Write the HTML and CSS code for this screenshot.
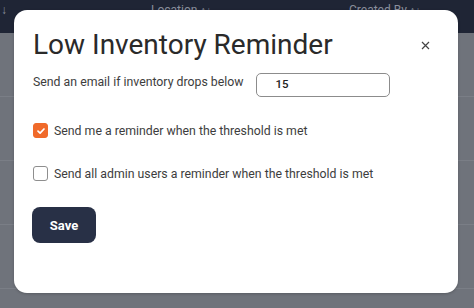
FILE: index.html
```html
<!DOCTYPE html>
<html>
<head>
<meta charset="utf-8">
<link rel="stylesheet" href="styles.css">
</head>
<body>
<div class="page">
  <div class="thead">
    <span class="th th-first">↓</span>
    <span class="th th-loc">Location <span class="sort">↑↓</span></span>
    <span class="th th-by">Created By <span class="sort">↑↓</span></span>
  </div>
  <div class="row"></div>
  <div class="row"></div>
  <div class="row"></div>
  <div class="row"></div>
</div>
<div class="overlay"></div>
<div class="modal">
  <div class="modal-head">
    <h1 class="title">Low Inventory Reminder</h1>
    <button class="close" aria-label="Close">
      <svg width="9" height="9" viewBox="0 0 9 9"><path d="M1 1L8 8M8 1L1 8" stroke="#444" stroke-width="1.2" fill="none"/></svg>
    </button>
  </div>
  <div class="field">
    <label class="label">Send an email if inventory drops below</label>
    <div class="input">15</div>
  </div>
  <div class="check-row first">
    <span class="box checked">
      <svg width="10" height="10" viewBox="0 0 10 10"><path d="M2 5.2L4.1 7.2L8 3" stroke="#fff" stroke-width="1.7" fill="none" stroke-linecap="round" stroke-linejoin="round"/></svg>
    </span>
    <span class="check-label">Send me a reminder when the threshold is met</span>
  </div>
  <div class="check-row second">
    <span class="box"></span>
    <span class="check-label">Send all admin users a reminder when the threshold is met</span>
  </div>
  <button class="save">Save</button>
</div>
</body>
</html>
```

FILE: styles.css
```css
html, body {
  margin: 0;
  padding: 0;
}
body {
  width: 474px;
  height: 308px;
  overflow: hidden;
  font-family: Roboto, "Liberation Sans", sans-serif;
  background: #6f737b;
  position: relative;
}
.page {
  width: 474px;
}
.thead {
  height: 33px;
  background: #1f2535;
  color: #8a8f9c;
  font-size: 12px;
  position: relative;
}
.th {
  position: absolute;
  top: 3px;
}
.th-first { left: 1px; }
.th-loc { left: 151px; }
.th-by { left: 349px; }
.sort { font-size: 11px; }
.row {
  height: 64px;
  border-bottom: 1px solid #7a7e86;
  box-sizing: border-box;
}
.row:first-of-type { height: 65px; }
.overlay {
  position: absolute;
  inset: 0;
}
.modal {
  position: absolute;
  left: 14px;
  top: 10px;
  width: 444px;
  height: 283px;
  box-sizing: border-box;
  background: #fff;
  border-radius: 13px;
  padding: 18px 19px 0 19px;
  box-shadow: 0 1px 3px rgba(0,0,0,0.2);
}
.modal-head {
  display: flex;
  align-items: center;
  justify-content: space-between;
}
.title {
  margin: 0;
  font-size: 28px;
  font-weight: 400;
  color: #2a2a2a;
  line-height: 34px;
}
.close {
  border: 0;
  background: none;
  padding: 0;
  margin-right: 9px;
  display: flex;
}
.field {
  display: flex;
  align-items: center;
  margin-top: 11px;
}
.label {
  font-size: 12.3px;
  color: #3d3d3d;
  margin-top: -7px;
}
.input {
  margin-left: 13px;
  width: 134px;
  height: 24px;
  box-sizing: border-box;
  border: 1.5px solid #8c8c8c;
  border-radius: 5px;
  font-size: 11.5px;
  font-weight: 500;
  color: #222;
  padding-left: 18px;
  line-height: 21px;
}
.check-row {
  display: flex;
  align-items: center;
  gap: 6px;
}
.check-row.first { margin-top: 26px; }
.check-row.second { margin-top: 28px; }
.box {
  width: 15px;
  height: 15px;
  box-sizing: border-box;
  border: 1.5px solid #8e8e8e;
  border-radius: 3px;
  display: flex;
  align-items: center;
  justify-content: center;
  flex: none;
}
.box.checked {
  background: #f06a2a;
  border-color: #f06a2a;
}
.check-label {
  font-size: 12.3px;
  color: #3d3d3d;
}
.save {
  margin-top: 26px;
  width: 64px;
  height: 36px;
  margin-left: -1px;
  border: 0;
  border-radius: 8px;
  background: #283046;
  color: #fff;
  font-family: Roboto, "Liberation Sans", sans-serif;
  font-size: 13px;
  font-weight: 700;
  display: block;
}
```
